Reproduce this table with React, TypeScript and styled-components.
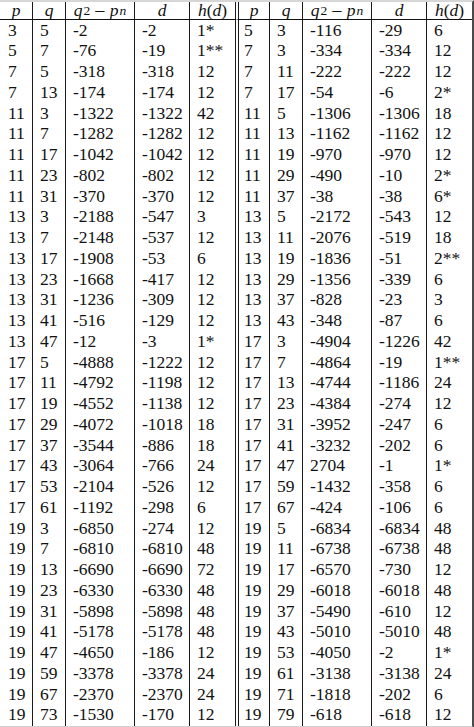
import styled, { createGlobalStyle } from "styled-components";

const GlobalStyle = createGlobalStyle`
  html, body {
    margin: 0;
    padding: 0;
    background: #fff;
  }
`;

type Row = [string, string, string, string, string];

const leftRows: Row[] = [
  ["3", "5", "-2", "-2", "1*"],
  ["5", "7", "-76", "-19", "1**"],
  ["7", "5", "-318", "-318", "12"],
  ["7", "13", "-174", "-174", "12"],
  ["11", "3", "-1322", "-1322", "42"],
  ["11", "7", "-1282", "-1282", "12"],
  ["11", "17", "-1042", "-1042", "12"],
  ["11", "23", "-802", "-802", "12"],
  ["11", "31", "-370", "-370", "12"],
  ["13", "3", "-2188", "-547", "3"],
  ["13", "7", "-2148", "-537", "12"],
  ["13", "17", "-1908", "-53", "6"],
  ["13", "23", "-1668", "-417", "12"],
  ["13", "31", "-1236", "-309", "12"],
  ["13", "41", "-516", "-129", "12"],
  ["13", "47", "-12", "-3", "1*"],
  ["17", "5", "-4888", "-1222", "12"],
  ["17", "11", "-4792", "-1198", "12"],
  ["17", "19", "-4552", "-1138", "12"],
  ["17", "29", "-4072", "-1018", "18"],
  ["17", "37", "-3544", "-886", "18"],
  ["17", "43", "-3064", "-766", "24"],
  ["17", "53", "-2104", "-526", "12"],
  ["17", "61", "-1192", "-298", "6"],
  ["19", "3", "-6850", "-274", "12"],
  ["19", "7", "-6810", "-6810", "48"],
  ["19", "13", "-6690", "-6690", "72"],
  ["19", "23", "-6330", "-6330", "48"],
  ["19", "31", "-5898", "-5898", "48"],
  ["19", "41", "-5178", "-5178", "48"],
  ["19", "47", "-4650", "-186", "12"],
  ["19", "59", "-3378", "-3378", "24"],
  ["19", "67", "-2370", "-2370", "24"],
  ["19", "73", "-1530", "-170", "12"],
];

const rightRows: Row[] = [
  ["5", "3", "-116", "-29", "6"],
  ["7", "3", "-334", "-334", "12"],
  ["7", "11", "-222", "-222", "12"],
  ["7", "17", "-54", "-6", "2*"],
  ["11", "5", "-1306", "-1306", "18"],
  ["11", "13", "-1162", "-1162", "12"],
  ["11", "19", "-970", "-970", "12"],
  ["11", "29", "-490", "-10", "2*"],
  ["11", "37", "-38", "-38", "6*"],
  ["13", "5", "-2172", "-543", "12"],
  ["13", "11", "-2076", "-519", "18"],
  ["13", "19", "-1836", "-51", "2**"],
  ["13", "29", "-1356", "-339", "6"],
  ["13", "37", "-828", "-23", "3"],
  ["13", "43", "-348", "-87", "6"],
  ["17", "3", "-4904", "-1226", "42"],
  ["17", "7", "-4864", "-19", "1**"],
  ["17", "13", "-4744", "-1186", "24"],
  ["17", "23", "-4384", "-274", "12"],
  ["17", "31", "-3952", "-247", "6"],
  ["17", "41", "-3232", "-202", "6"],
  ["17", "47", "2704", "-1", "1*"],
  ["17", "59", "-1432", "-358", "6"],
  ["17", "67", "-424", "-106", "6"],
  ["19", "5", "-6834", "-6834", "48"],
  ["19", "11", "-6738", "-6738", "48"],
  ["19", "17", "-6570", "-730", "12"],
  ["19", "29", "-6018", "-6018", "48"],
  ["19", "37", "-5490", "-610", "12"],
  ["19", "43", "-5010", "-5010", "48"],
  ["19", "53", "-4050", "-2", "1*"],
  ["19", "61", "-3138", "-3138", "24"],
  ["19", "71", "-1818", "-202", "6"],
  ["19", "79", "-618", "-618", "12"],
];

const Sheet = styled.div`
  display: grid;
  grid-template-columns: 32px 33px 69px 55px 46px 34px 33px 69px 55px 46px;
  grid-template-rows: 18px repeat(34, 20.75px);
  width: 474px;
  box-sizing: border-box;
  border-top: 2px solid #d6d6d6;
  border-bottom: 2px solid #cfcfcf;
  border-right: 2px solid #4a4a4a;
  font-family: "Liberation Serif", "Times New Roman", serif;
  font-size: 17.5px;
  color: #111;
`;

const Cell = styled.div<{ $first?: boolean; $split?: boolean; $head?: boolean }>`
  box-sizing: border-box;
  display: flex;
  align-items: center;
  justify-content: ${(p) => (p.$head ? "center" : "flex-start")};
  padding-left: ${(p) => (p.$head ? 0 : p.$first ? 8 : p.$split ? 5 : 7)}px;
  border-left: ${(p) =>
    p.$first ? "none" : p.$split ? "4px double #1a1a1a" : "1px solid #1a1a1a"};
  border-bottom: ${(p) => (p.$head ? "1px solid #111" : "none")};
  white-space: nowrap;
  line-height: 1;
`;

const MathVar = styled.i`
  font-style: italic;
`;

const Sup = styled.sup`
  font-size: 13.5px;
  line-height: 0;
  vertical-align: 7px;
  margin-left: 1px;
`;

const Minus = styled.span`
  margin: 0 4px;
  font-size: 20px;
`;

const HeaderCells = ({ split }: { split?: boolean }) => (
  <>
    <Cell $head $first={!split} $split={split}>
      <MathVar>p</MathVar>
    </Cell>
    <Cell $head>
      <MathVar>q</MathVar>
    </Cell>
    <Cell $head>
      <MathVar>q</MathVar>
      <Sup>2</Sup>
      <Minus>−</Minus>
      <MathVar>p</MathVar>
      <Sup>
        <MathVar>n</MathVar>
      </Sup>
    </Cell>
    <Cell $head>
      <MathVar>d</MathVar>
    </Cell>
    <Cell $head>
      <MathVar>h</MathVar>(<MathVar>d</MathVar>)
    </Cell>
  </>
);

export default function App() {
  return (
    <>
      <GlobalStyle />
      <Sheet>
        <HeaderCells />
        <HeaderCells split />
        {leftRows.map((row, i) => (
          <>
            {row.map((v, j) => (
              <Cell key={`l${i}-${j}`} $first={j === 0}>
                {v}
              </Cell>
            ))}
            {rightRows[i].map((v, j) => (
              <Cell key={`r${i}-${j}`} $split={j === 0}>
                {v}
              </Cell>
            ))}
          </>
        ))}
      </Sheet>
    </>
  );
}
